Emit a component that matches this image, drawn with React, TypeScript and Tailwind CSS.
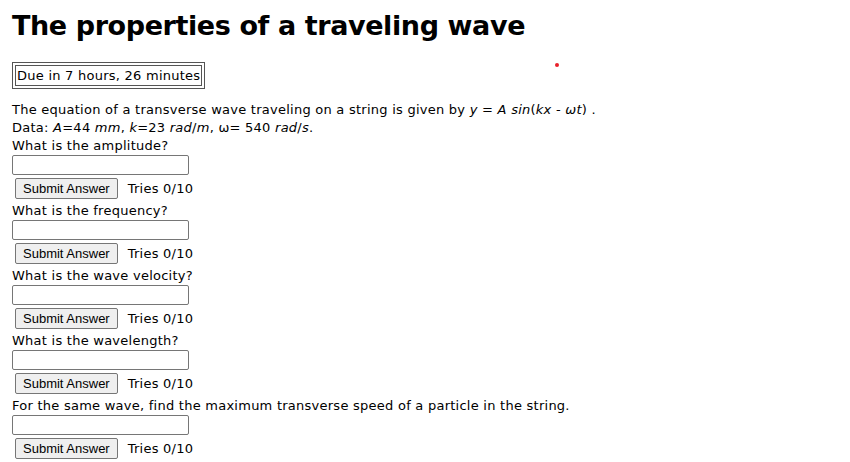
const questions = [
  "What is the amplitude?",
  "What is the frequency?",
  "What is the wave velocity?",
  "What is the wavelength?",
  "For the same wave, find the maximum transverse speed of a particle in the string.",
];

const QuestionBlock = ({ label }: { label: string }) => (
  <div className="flex flex-col">
    <div className="h-[18px] leading-[18px]">{label}</div>
    <input
      type="text"
      className="h-[20px] w-[177px] border border-[#767676] rounded-[2px] bg-white"
    />
    <div className="flex items-center mt-[3px] mb-[3px] h-[21px]">
      <button className="ml-[3px] h-[21px] px-[7px] border border-[#767676] rounded-[2px] bg-[#efefef] text-[13px] text-black tracking-normal font-['Liberation_Sans',Arial,sans-serif]">
        Submit Answer
      </button>
      <span className="ml-[10px]">Tries 0/10</span>
    </div>
  </div>
);

export default function App() {
  return (
    <div className="relative min-h-[462px] bg-white px-[12px] text-[13px] tracking-[0.25px] text-black font-['DejaVu_Sans',Verdana,sans-serif]">
      <h1 className="pt-[9px] text-[27px] leading-[34px] font-bold tracking-[-0.4px]">
        The properties of a traveling wave
      </h1>
      <div className="mt-[19px] inline-block border-[4px] border-double border-[#555] px-[1px] leading-[19px]">
        Due in 7 hours, 26 minutes
      </div>
      <span className="absolute left-[555px] top-[63px] h-[4px] w-[4px] rounded-full bg-[#e8202a]" />
      <div className="mt-[12px]">
        <div className="h-[18px] leading-[18px]">
          The equation of a transverse wave traveling on a string is given by{" "}
          <i>y</i> = <i>A</i> <i>sin</i>(<i>kx</i> - <i>ωt</i>) .
        </div>
        <div className="h-[18px] leading-[18px]">
          Data: <i>A</i>=44 <i>mm</i>, <i>k</i>=23 <i>rad</i>/<i>m</i>, ω= 540{" "}
          <i>rad</i>/<i>s</i>.
        </div>
        {questions.map((q) => (
          <QuestionBlock key={q} label={q} />
        ))}
      </div>
    </div>
  );
}
